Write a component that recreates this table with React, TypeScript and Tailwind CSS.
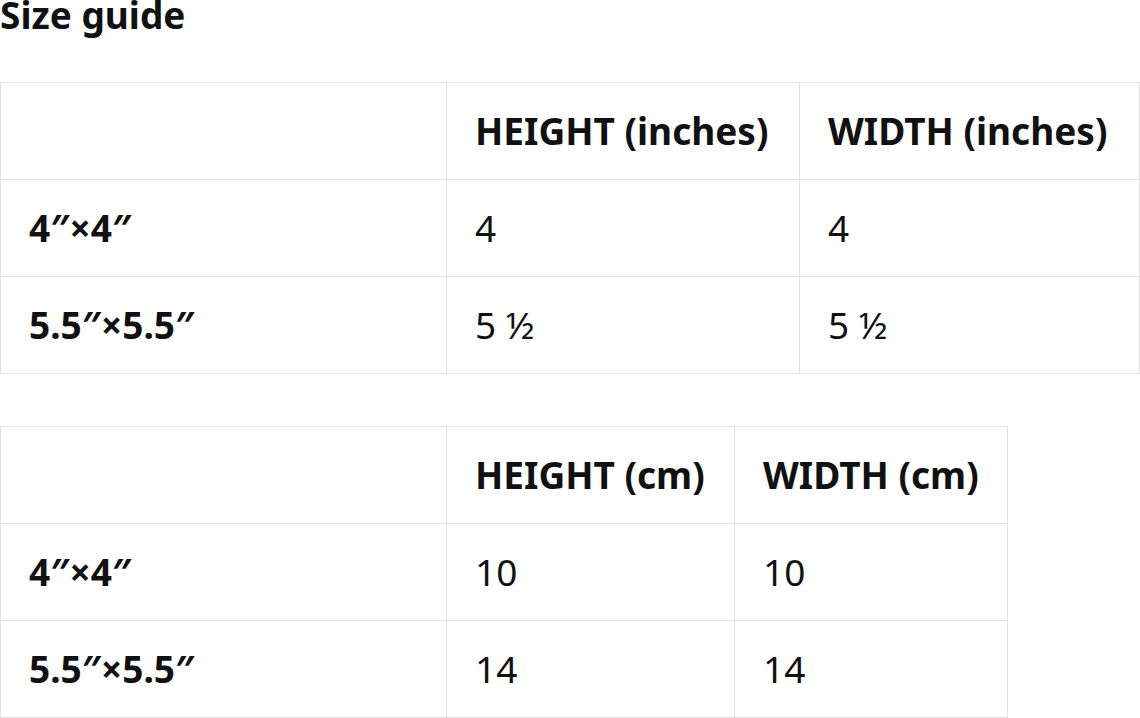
import React from "react";

type Row = { label: string; h: string; w: string };

function SizeTable({
  hHead,
  wHead,
  rows,
  c2,
  c3,
}: {
  hHead: string;
  wHead: string;
  rows: Row[];
  c2: string;
  c3: string;
}) {
  const cell = "border border-[#e3e3e3] px-[28px] py-[20px] leading-[56px] whitespace-nowrap text-left align-middle";
  return (
    <table className="border-collapse">
      <thead>
        <tr>
          <th className={`${cell} w-[446px]`}></th>
          <th className={`${cell} ${c2} font-bold`}>{hHead}</th>
          <th className={`${cell} ${c3} font-bold`}>{wHead}</th>
        </tr>
      </thead>
      <tbody>
        {rows.map((r) => (
          <tr key={r.label}>
            <td className={`${cell} font-bold`}>{r.label}</td>
            <td className={`${cell} font-normal`}>{r.h}</td>
            <td className={`${cell} font-normal`}>{r.w}</td>
          </tr>
        ))}
      </tbody>
    </table>
  );
}

export default function App() {
  return (
    <div className="bg-white w-[1140px] h-[718px] overflow-hidden text-[#111] text-[37px] font-['Noto_Sans',_'Open_Sans',_sans-serif]">
      <div className="font-bold leading-[30px] mb-[52px]">Size guide</div>
      <SizeTable
        hHead="HEIGHT (inches)"
        wHead="WIDTH (inches)"
        c2="w-[353px]"
        c3="w-[340px]"
        rows={[
          { label: "4″×4″", h: "4", w: "4" },
          { label: "5.5″×5.5″", h: "5 ½", w: "5 ½" },
        ]}
      />
      <div className="h-[52px]" />
      <SizeTable
        hHead="HEIGHT (cm)"
        wHead="WIDTH (cm)"
        c2="w-[288px]"
        c3="w-[272px]"
        rows={[
          { label: "4″×4″", h: "10", w: "10" },
          { label: "5.5″×5.5″", h: "14", w: "14" },
        ]}
      />
    </div>
  );
}
